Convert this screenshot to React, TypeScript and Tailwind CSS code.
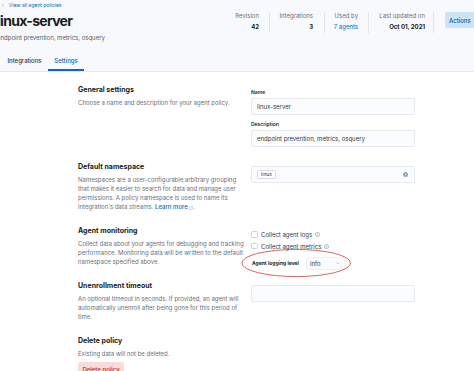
import React from "react";

const InfoIcon = () => (
  <svg width="5" height="5" viewBox="0 0 16 16" className="inline-block">
    <circle cx="8" cy="8" r="6.8" fill="none" stroke="#69707d" strokeWidth="1.4" />
    <path d="M8 7v4.6" stroke="#69707d" strokeWidth="1.6" />
    <circle cx="8" cy="4.7" r="1" fill="#69707d" />
  </svg>
);

const PopoutIcon = () => (
  <svg width="4" height="4" viewBox="0 0 16 16" className="inline-block ml-[1.5px] align-[-0.5px]">
    <path d="M7 2H2v12h12V9" fill="none" stroke="#7aa6d1" strokeWidth="1.6" />
    <path d="M9 2h5v5M14 2L7 9" fill="none" stroke="#7aa6d1" strokeWidth="1.6" />
  </svg>
);

const Stat = ({ w, label, value, blue }: { w: string; label: string; value: string; blue?: boolean }) => (
  <div className={`${w} flex flex-col items-end shrink-0`}>
    <div className="text-[6px] leading-[9px] text-[#69707d] whitespace-nowrap">{label}</div>
    <div
      className={
        blue
          ? "mt-[2px] text-[6px] leading-[9px] text-[#006bb8] whitespace-nowrap"
          : "mt-[2px] text-[6px] leading-[9px] font-bold text-[#1a1c21] whitespace-nowrap"
      }
    >
      {value}
    </div>
  </div>
);

const Divider = ({ ml }: { ml: string }) => <div className={`${ml} mt-[1px] w-px h-[21px] bg-[#dfe4ec] shrink-0`} />;

const Heading = ({ children }: { children: React.ReactNode }) => (
  <div className="text-[7px] leading-[9px] font-bold text-[#1a1c21] whitespace-nowrap">{children}</div>
);

const Desc = ({ children }: { children: React.ReactNode }) => (
  <div className="mt-[4px] text-[6px] leading-[9px] text-[#69707d] whitespace-nowrap">{children}</div>
);

const Input = ({ children, mt }: { children?: React.ReactNode; mt: string }) => (
  <div
    className={`${mt} h-[17px] w-[164px] bg-[#fbfcfd] border border-[#e6e9f0] rounded-[2px] flex items-center pl-[5px] text-[6px] text-[#343741] whitespace-nowrap`}
  >
    {children}
  </div>
);

const Label = ({ children, mt }: { children: React.ReactNode; mt?: string }) => (
  <div className={`${mt ?? ""} text-[5px] leading-[7px] font-semibold text-[#1a1c21]`}>{children}</div>
);

const Checkbox = ({ label, mt }: { label: string; mt?: string }) => (
  <div className={`${mt ?? ""} flex items-center h-[9px]`}>
    <div className="w-[6.5px] h-[6.5px] border border-[#c9cfd8] rounded-[1.5px] bg-white shrink-0" />
    <span className="ml-[3.5px] text-[6px] text-[#343741] whitespace-nowrap">{label}</span>
    <span className="ml-[3px] flex items-center">
      <InfoIcon />
    </span>
  </div>
);

export default function App() {
  return (
    <div className="relative w-[474px] h-[371px] overflow-hidden bg-white font-['Inter',sans-serif]">
      {/* Header */}
      <div className="h-[72px] bg-[#f8f9fc] border-b border-[#e6e9ef] overflow-hidden">
        <div className="flex w-[500px] -ml-[3px]">
          <div className="w-[239px] shrink-0 flex flex-col">
            <div className="h-[9px] pt-[1px] pl-[4px] flex items-center text-[5px] leading-[8px] text-[#006bb8]">
              <svg width="4" height="4" viewBox="0 0 16 16">
                <path d="M10 3L5 8l5 5" fill="none" stroke="#69707d" strokeWidth="1.6" />
              </svg>
              <span className="ml-[4px] whitespace-nowrap">View all agent policies</span>
            </div>
            <div className="mt-[4px] h-[16px] text-[14px] leading-[16px] font-bold tracking-[-0.05em] text-[#1a1c21] whitespace-nowrap">
              linux-server
            </div>
            <div className="mt-[4px] text-[6px] leading-[9px] text-[#535966] whitespace-nowrap">
              endpoint prevention, metrics, osquery
            </div>
            <div className="mt-[10px] h-[19px] pl-[4px] flex text-[6px] font-medium">
              <div className="w-[47px] flex items-center justify-center text-[#343741] border-b-2 border-transparent">
                Integrations
              </div>
              <div className="w-[36px] flex items-center justify-center text-[#006bb8] border-b-2 border-[#0b64dd]">
                Settings
              </div>
            </div>
          </div>
          <div className="flex items-start pt-[11px]">
            <Stat w="w-[23px]" label="Revision" value="42" />
            <Divider ml="ml-[10px]" />
            <div className="ml-[9px]">
              <Stat w="w-[34px]" label="Integrations" value="3" />
            </div>
            <Divider ml="ml-[11px]" />
            <div className="ml-[9px]">
              <Stat w="w-[24px]" label="Used by" value="7 agents" blue />
            </div>
            <Divider ml="ml-[10px]" />
            <div className="ml-[10px]">
              <Stat w="w-[46px]" label="Last updated on" value="Oct 01, 2021" />
            </div>
            <Divider ml="ml-[8px]" />
            <div className="ml-[11px] mt-[1px] w-[48px] h-[16px] bg-[#cce4f5] rounded-[2px] flex items-center pl-[4px] text-[6px] font-medium text-[#0061a6] whitespace-nowrap">
              Actions
            </div>
          </div>
        </div>
      </div>

      {/* Content */}
      <div className="pl-[78px] pt-[13px] flex flex-col gap-[15px]">
        {/* General settings */}
        <div className="flex items-start">
          <div className="w-[166px] shrink-0">
            <Heading>General settings</Heading>
            <Desc>Choose a name and description for your agent policy.</Desc>
          </div>
          <div className="ml-[7px] pt-[4px]">
            <Label>Name</Label>
            <Input mt="mt-[2px]">linux-server</Input>
            <Label mt="mt-[6px]">Description</Label>
            <Input mt="mt-[2px]">endpoint prevention, metrics, osquery</Input>
          </div>
        </div>

        {/* Default namespace */}
        <div className="flex items-start">
          <div className="w-[166px] shrink-0">
            <Heading>Default namespace</Heading>
            <Desc>
              Namespaces are a user-configurable arbitrary grouping
              <br />
              that makes it easier to search for data and manage user
              <br />
              permissions. A policy namespace is used to name its
              <br />
              integration's data streams.{" "}
              <span className="font-medium text-[#006bb8]">Learn more</span>
              <PopoutIcon />.
            </Desc>
          </div>
          <div className="ml-[7px]">
            <div className="mt-[4px] h-[17px] w-[164px] bg-[#fbfcfd] border border-[#e6e9f0] rounded-[2px] flex items-center pl-[5px] pr-[6px]">
              <div className="h-[8.5px] w-[19px] bg-white border border-[#d6dbe3] rounded-[1.5px] flex items-center justify-center text-[5px] text-[#343741]">
                linux
              </div>
              <div className="ml-auto w-[5.5px] h-[5.5px] rounded-full bg-[#98a2b3] flex items-center justify-center">
                <svg width="3" height="3" viewBox="0 0 10 10">
                  <path d="M2.5 2.5l5 5M7.5 2.5l-5 5" stroke="white" strokeWidth="1.6" />
                </svg>
              </div>
            </div>
          </div>
        </div>

        {/* Agent monitoring */}
        <div className="flex items-start">
          <div className="w-[166px] shrink-0">
            <Heading>Agent monitoring</Heading>
            <Desc>
              Collect data about your agents for debugging and tracking
              <br />
              performance. Monitoring data will be written to the default
              <br />
              namespace specified above.
            </Desc>
          </div>
          <div className="ml-[7px] pt-[4px]">
            <Checkbox label="Collect agent logs" />
            <Checkbox label="Collect agent metrics" mt="mt-[2.5px]" />
            <div className="mt-[6px] -mb-[4px] flex items-center">
              <div className="w-[55px] pl-[1px] text-[5px] font-bold text-[#1a1c21] whitespace-nowrap">
                Agent logging level
              </div>
              <div className="w-[39px] h-[13.5px] bg-[#fbfcfd] border border-[#eceff4] rounded-[2px] flex items-center pl-[3px] pr-[4px] text-[6px] text-[#343741]">
                info
                <svg className="ml-auto" width="4" height="4" viewBox="0 0 16 16">
                  <path d="M3 6l5 5 5-5" fill="none" stroke="#69707d" strokeWidth="1.6" />
                </svg>
              </div>
            </div>
          </div>
        </div>

        {/* Unenrollment timeout */}
        <div className="flex items-start">
          <div className="w-[166px] shrink-0">
            <Heading>Unenrollment timeout</Heading>
            <Desc>
              An optional timeout in seconds. If provided, an agent will
              <br />
              automatically unenroll after being gone for this period of
              <br />
              time.
            </Desc>
          </div>
          <div className="ml-[7px]">
            <Input mt="mt-[4px]" />
          </div>
        </div>

        {/* Delete policy */}
        <div className="flex flex-col items-start">
          <Heading>Delete policy</Heading>
          <Desc>Existing data will not be deleted.</Desc>
          <div className="mt-[3.5px] w-[46px] h-[16px] bg-[#f8dcd9] rounded-[2px] flex items-center justify-center text-[6px] font-medium text-[#bd271e] whitespace-nowrap">
            Delete policy
          </div>
        </div>
      </div>

      {/* Red annotation ellipse */}
      <svg className="absolute left-[241px] top-[248px]" width="112" height="31" viewBox="0 0 112 31">
        <ellipse cx="55.2" cy="15" rx="54.3" ry="13.6" fill="none" stroke="#d9534f" strokeWidth="0.9" />
      </svg>
    </div>
  );
}
